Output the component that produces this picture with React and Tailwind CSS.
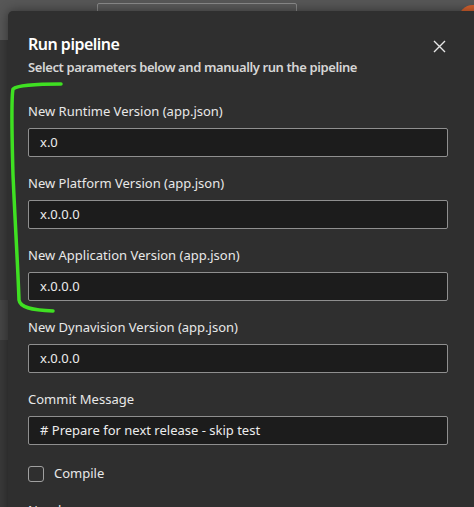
import React from "react";

function Field({ label, value }) {
  return (
    <div className="flex flex-col">
      <div className="h-[20px] text-[13px] leading-[20px] text-[#e8e8e8]">{label}</div>
      <div className="mt-[7px] w-[420px] h-[29px] flex items-center rounded-[2px] border border-[#8f8f8f] bg-[#1c1c1c] px-[11px] text-[13px] text-[#ececec]">
        {value}
      </div>
    </div>
  );
}

export default function App() {
  return (
    <div
      className="relative w-[474px] h-[507px] overflow-hidden bg-[#3a3a3a]"
      style={{ fontFamily: '"Noto Sans", "Open Sans", sans-serif' }}
    >
      {/* page behind the overlay */}
      <div className="h-[40px] bg-[#575757] flex items-start">
        <div className="ml-[97px] mt-[3px] w-[200px] h-[30px] rounded-[2px] border border-[#8a8a8a] bg-[#5a5a5a]" />
        <div className="ml-auto mr-[-14px] mt-[5px] w-[30px] h-[30px] rounded-full bg-[#d8622e]" />
      </div>
      <div className="h-[260px] bg-[#3c3c3c]" />
      <div className="h-[40px] bg-[#464646]" />

      {/* dialog */}
      <div className="absolute left-[8px] top-[11px] w-[490px] h-[520px] rounded-[5px] bg-[#2f2f2f] shadow-[0_0_12px_rgba(0,0,0,0.45)] pl-[20px] pt-[21px]">
        <div className="flex items-start">
          <div className="flex-1">
            <div className="h-[24px] text-[16px] leading-[24px] font-semibold tracking-[-0.5px] text-white">Run pipeline</div>
            <div className="mt-[1px] h-[20px] text-[13px] leading-[20px] font-semibold tracking-[-0.4px] text-[#d6d6d6]">
              Select parameters below and manually run the pipeline
            </div>
          </div>
          <div className="mr-[52px] mt-[7px] w-[14px] h-[14px] flex items-center justify-center">
            <svg width="13" height="13" viewBox="0 0 13 13">
              <path d="M1 1 L12 12 M12 1 L1 12" stroke="#e6e6e6" strokeWidth="1.4" fill="none" />
            </svg>
          </div>
        </div>

        <div className="mt-[24px] flex flex-col gap-[16px]">
          <Field label="New Runtime Version (app.json)" value="x.0" />
          <Field label="New Platform Version (app.json)" value="x.0.0.0" />
          <Field label="New Application Version (app.json)" value="x.0.0.0" />
          <Field label="New Dynavision Version (app.json)" value="x.0.0.0" />
          <Field label="Commit Message" value="# Prepare for next release - skip test" />
          <div className="flex items-center h-[20px] mt-[3px]">
            <div className="w-[16px] h-[16px] rounded-[3px] border border-[#a0a0a0]" />
            <span className="ml-[10px] text-[13px] text-[#e8e8e8]">Compile</span>
          </div>
          <div className="h-[20px] text-[13px] leading-[20px] text-[#e8e8e8]">Number</div>
        </div>
      </div>

      {/* green hand-drawn annotation */}
      <svg className="absolute left-0 top-0" width="474" height="507" viewBox="0 0 474 507">
        <path
          d="M61 84 C 40 84, 18 85, 13 89 C 11 100, 12 140, 13 175 C 15 220, 18 270, 19 300 C 20 307, 30 310, 53 311"
          stroke="#3fe022"
          strokeWidth="3.5"
          strokeLinecap="round"
          strokeLinejoin="round"
          fill="none"
        />
      </svg>
    </div>
  );
}
